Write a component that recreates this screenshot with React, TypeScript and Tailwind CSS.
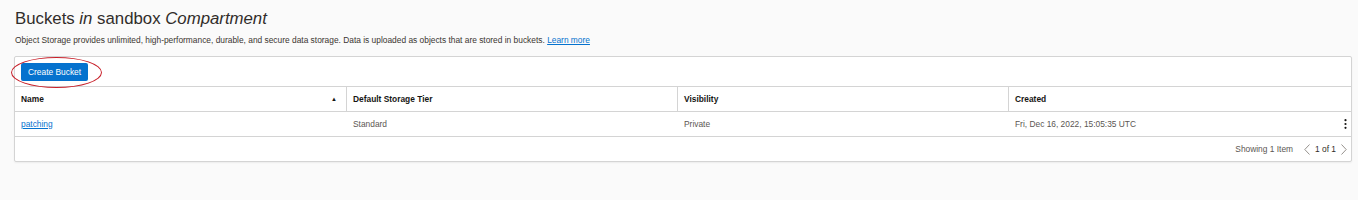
import React from 'react';

const columns = ['Name', 'Default Storage Tier', 'Visibility', 'Created'];

const App: React.FC = () => {
  return (
    <div
      className="relative h-[200px] w-full bg-[#fafafa] pl-[14px] pr-[6px] text-[#312d2a]"
      style={{ fontFamily: '"Liberation Sans", Arial, sans-serif' }}
    >
      {/* Page heading */}
      <h1 className="pt-[9px] pl-px text-[16.8px] leading-[20px] text-[#312d2a]">
        Buckets <i>in</i> sandbox <i>Compartment</i>
      </h1>
      <p className="mt-[5px] pl-px text-[8.4px] leading-[12px] text-[#3a3631]">
        Object Storage provides unlimited, high-performance, durable, and secure data storage. Data is uploaded as objects
        that are stored in buckets.{' '}
        <a href="#" className="text-[#0572ce] underline">
          Learn more
        </a>
      </p>

      {/* Buckets panel */}
      <div className="relative mt-[10px] rounded-[2px] border border-[#d4d4d4] bg-white shadow-[0_1px_2px_rgba(0,0,0,0.06)]">
        <div className="flex h-[29px] items-start pl-[6px] pt-[6px]">
          <button className="h-[18px] rounded-[2px] bg-[#0572ce] px-[7px] text-[8.4px] leading-[18px] text-white">
            Create Bucket
          </button>
        </div>

        {/* Table header */}
        <div className="grid h-[25px] grid-cols-[331px_331px_331px_1fr] border-t border-[#d4d4d4] text-[8.4px] font-bold text-[#161513]">
          {columns.map((col, i) => (
            <div
              key={col}
              className={`flex items-center justify-between pl-[6px] pr-[9px] ${i > 0 ? 'border-l border-[#d4d4d4]' : ''}`}
            >
              <span>{col}</span>
              {i === 0 && <span className="text-[6px] leading-none">▲</span>}
            </div>
          ))}
        </div>

        {/* Row */}
        <div className="grid h-[25px] grid-cols-[331px_331px_331px_1fr] border-t border-[#d4d4d4] text-[8.4px] text-[#5b5652]">
          <div className="flex items-center pl-[6px]">
            <a href="#" className="text-[#0572ce] underline">
              patching
            </a>
          </div>
          <div className="flex items-center pl-[7px]">Standard</div>
          <div className="flex items-center pl-[7px]">Private</div>
          <div className="flex items-center justify-between pl-[7px] pr-[4px]">
            <span>Fri, Dec 16, 2022, 15:05:35 UTC</span>
            <svg width="3" height="10" viewBox="0 0 3 10" className="text-[#161513]">
              <circle cx="1.5" cy="1.2" r="1.1" fill="currentColor" />
              <circle cx="1.5" cy="5" r="1.1" fill="currentColor" />
              <circle cx="1.5" cy="8.8" r="1.1" fill="currentColor" />
            </svg>
          </div>
        </div>

        {/* Footer */}
        <div className="flex h-[25px] items-center justify-end border-t border-[#d4d4d4] pr-[4px] text-[8.4px] text-[#5b5652]">
          <span>Showing 1 Item</span>
          <svg width="6" height="11" viewBox="0 0 6 11" className="ml-[11px] text-[#8a8580]">
            <path d="M5.5 0.5 L0.8 5.5 L5.5 10.5" fill="none" stroke="currentColor" strokeWidth="0.9" />
          </svg>
          <span className="ml-[5px] text-[#312d2a]">1 of 1</span>
          <svg width="6" height="11" viewBox="0 0 6 11" className="ml-[5px] text-[#8a8580]">
            <path d="M0.5 0.5 L5.2 5.5 L0.5 10.5" fill="none" stroke="currentColor" strokeWidth="0.9" />
          </svg>
        </div>
      </div>

      {/* Red annotation around Create Bucket */}
      <div className="pointer-events-none absolute left-[11px] top-[57px] h-[31px] w-[91px] rounded-[50%] border-[1.5px] border-[#c8202a]" />
    </div>
  );
};

export default App;
